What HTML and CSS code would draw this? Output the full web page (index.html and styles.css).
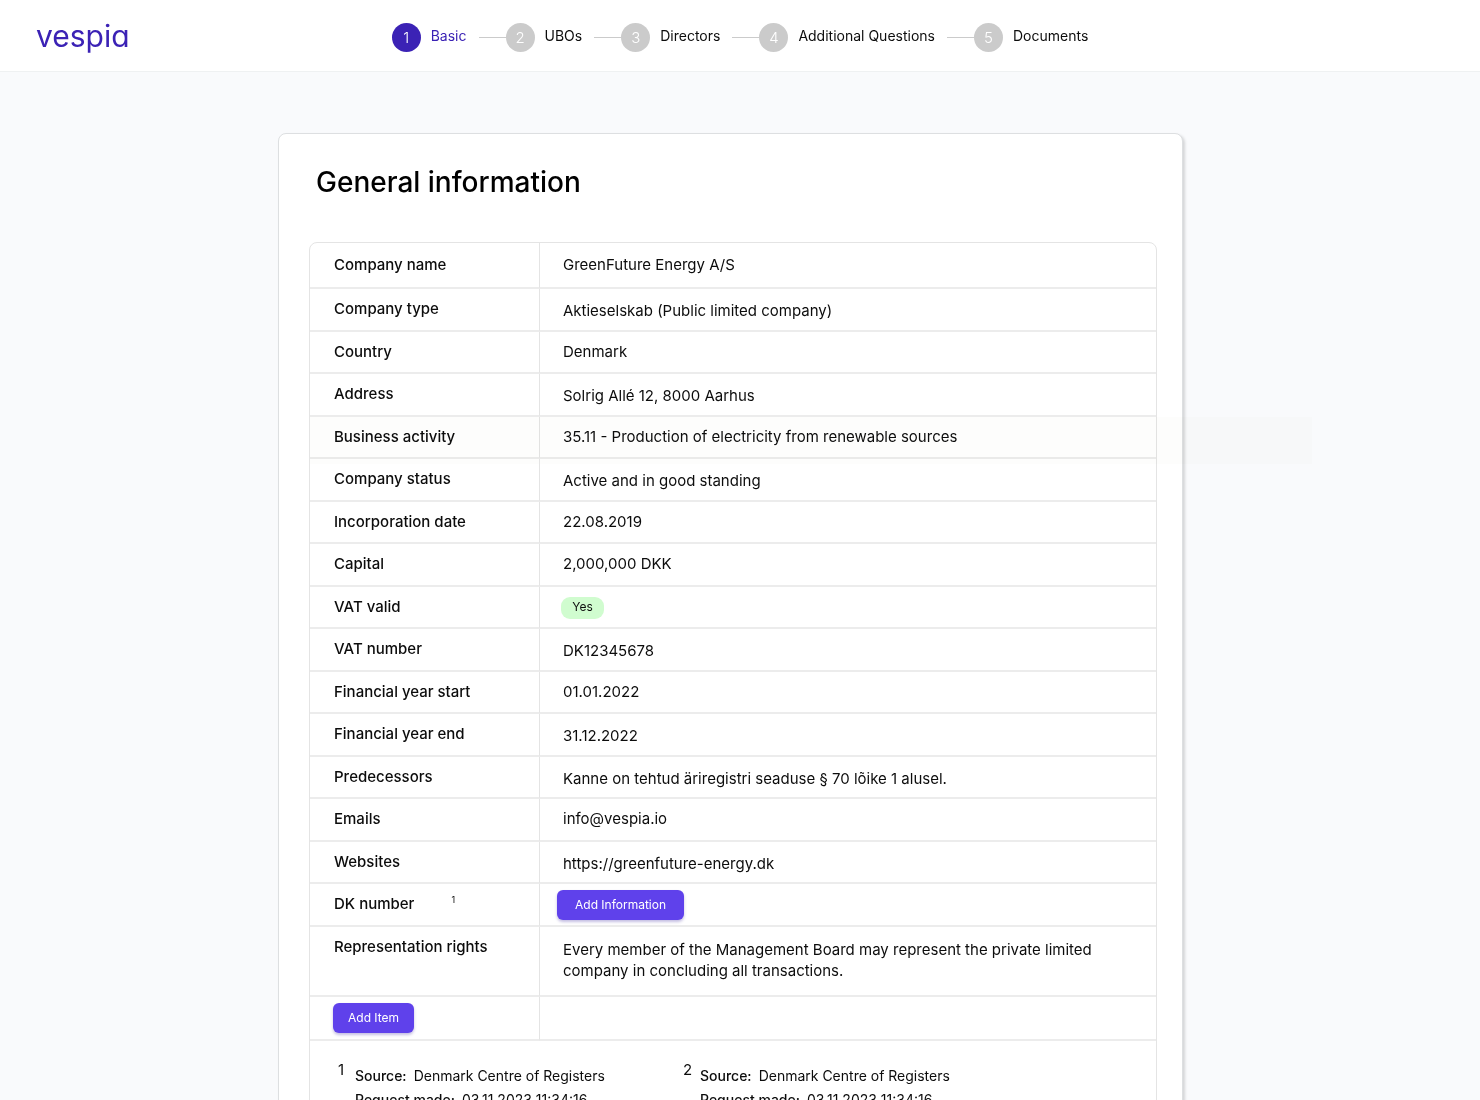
FILE: index.html
```html
<!DOCTYPE html>
<html lang="en">
<head>
  <meta charset="UTF-8">
  <meta name="viewport" content="width=device-width, initial-scale=1.0">
  <title>Vespia - General information</title>
  <link rel="stylesheet" href="styles.css">
</head>
<body>
  <header class="topbar">
    <a class="logo" href="#">vespia</a>
    <ol class="steps">
      <li class="step active" aria-current="step"><span class="step-number">1</span><span class="step-label">Basic</span></li>
      <li class="step"><span class="step-number">2</span><span class="step-label">UBOs</span></li>
      <li class="step"><span class="step-number">3</span><span class="step-label">Directors</span></li>
      <li class="step"><span class="step-number">4</span><span class="step-label">Additional Questions</span></li>
      <li class="step"><span class="step-number">5</span><span class="step-label">Documents</span></li>
    </ol>
  </header>

  <main>
    <section class="card" aria-labelledby="general-heading">
      <h1 id="general-heading">General information</h1>

      <div class="info">
        <table class="info-table">
          <tbody>
            <tr><th scope="row">Company name</th><td>GreenFuture Energy A/S</td></tr>
            <tr class="low"><th scope="row">Company type</th><td>Aktieselskab (Public limited company)</td></tr>
            <tr><th scope="row">Country</th><td>Denmark</td></tr>
            <tr class="low"><th scope="row">Address</th><td>Solrig Allé 12, 8000 Aarhus</td></tr>
            <tr class="highlight"><th scope="row">Business activity</th><td>35.11 - Production of electricity from renewable sources</td></tr>
            <tr class="low"><th scope="row">Company status</th><td>Active and in good standing</td></tr>
            <tr><th scope="row">Incorporation date</th><td>22.08.2019</td></tr>
            <tr><th scope="row">Capital</th><td>2,000,000 DKK</td></tr>
            <tr class="low"><th scope="row">VAT valid</th><td><span class="badge">Yes</span></td></tr>
            <tr class="low"><th scope="row">VAT number</th><td>DK12345678</td></tr>
            <tr><th scope="row">Financial year start</th><td>01.01.2022</td></tr>
            <tr class="low"><th scope="row">Financial year end</th><td>31.12.2022</td></tr>
            <tr class="low"><th scope="row">Predecessors</th><td>Kanne on tehtud äriregistri seaduse § 70 lõike 1 alusel.</td></tr>
            <tr><th scope="row">Emails</th><td>info@vespia.io</td></tr>
            <tr class="low"><th scope="row">Websites</th><td>https://greenfuture-energy.dk</td></tr>
            <tr><th scope="row">DK number <sup class="note-ref">1</sup></th><td><button type="button" class="btn btn-info">Add Information</button></td></tr>
            <tr class="tall"><th scope="row">Representation rights</th><td>Every member of the Management Board may represent the private limited company in concluding all transactions.</td></tr>
            <tr class="actions"><th><button type="button" class="btn">Add Item</button></th><td></td></tr>
          </tbody>
        </table>

        <div class="sources">
          <div class="source">
            <span class="source-number">1</span>
            <dl>
              <div><dt>Source:</dt><dd>Denmark Centre of Registers</dd></div>
              <div><dt>Request made:</dt><dd>03.11.2023 11:34:16</dd></div>
            </dl>
          </div>
          <div class="source">
            <span class="source-number">2</span>
            <dl>
              <div><dt>Source:</dt><dd>Denmark Centre of Registers</dd></div>
              <div><dt>Request made:</dt><dd>03.11.2023 11:34:16</dd></div>
            </dl>
          </div>
        </div>
      </div>
    </section>
  </main>
</body>
</html>
```
FILE: styles.css
```css
:root {
  --brand: #3b22b5;
  --button: #5f41eb;
  --line: #ececec;
  --muted: #cbcbcb;
  --page-bg: #f9fafc;
}

* {
  box-sizing: border-box;
}

body {
  margin: 0;
  font-family: Inter, "Liberation Sans", sans-serif;
  font-size: 15px;
  line-height: 21px;
  color: #0c0c0c;
  background: var(--page-bg);
}

/* Top bar */
.topbar {
  display: grid;
  grid-template-columns: 1fr auto 1fr;
  align-items: center;
  height: 72px;
  padding: 4px 36px 0;
  background: #fff;
  border-bottom: 1px solid #eff1f2;
}

.logo {
  padding-bottom: 4px;
  color: var(--brand);
  font-size: 30px;
  font-weight: 400;
  line-height: 36px;
  font-feature-settings: "cv11";
  text-decoration: none;
}

.steps {
  display: flex;
  gap: 12px;
  margin: 0;
  padding: 0;
  list-style: none;
}

.step {
  display: flex;
  align-items: center;
  font-size: 14px;
}

.step + .step::before {
  content: "";
  width: 27px;
  height: 1px;
  background: var(--muted);
}

.step-number {
  width: 29px;
  height: 29px;
  margin-right: 10px;
  border-radius: 50%;
  background: var(--muted);
  color: #fff;
  font-size: 15px;
  font-weight: 300;
  line-height: 29px;
  text-align: center;
}

.step-label {
  padding-bottom: 4px;
}

.active {
  color: var(--brand);
}

.active .step-number {
  background: var(--brand);
}

/* Card */
main {
  padding: 61px 19px 60px 0;
}

.card {
  max-width: 905px;
  margin: 0 auto;
  padding: 30px 25px 40px 30px;
  background: #fff;
  border: 1px solid #dddfe1;
  border-radius: 8px;
  box-shadow: 2px 2px 3px rgba(0, 0, 0, 0.15);
}

h1 {
  margin: 0 0 42px 7px;
  font-size: 28px;
  font-weight: 500;
  line-height: 36px;
  color: #000;
}

.info {
  border: 1px solid #e4e4e4;
  border-radius: 8px;
}

/* Company table */
.info-table {
  width: 100%;
  border-collapse: separate;
  border-spacing: 0;
  table-layout: fixed;
}

tr {
  position: relative;
  height: 42px;
}

tr:nth-child(even) {
  height: 43px;
}

tr:first-child {
  height: 46px;
}

th,
td {
  padding: 0 24px 2px;
  border-bottom: 2px solid var(--line);
  text-align: left;
  vertical-align: middle;
}

th {
  width: 230px;
  padding-right: 0;
  border-right: 1px solid #e4e4e4;
  font-weight: 500;
}

td {
  padding-left: 23px;
}

.low td {
  padding-top: 4px;
}

/* Tint runs past the card edge */
.highlight th::after {
  content: "";
  position: absolute;
  top: 0;
  left: 0;
  width: 1002px;
  height: 47px;
  background: #fdfdfc;
  mix-blend-mode: multiply;
  pointer-events: none;
}

tr.tall {
  height: 70px;
}

.tall th {
  padding-top: 9px;
  vertical-align: top;
}

tr.actions {
  height: 44px;
}

.badge {
  display: block;
  width: 43px;
  height: 22px;
  margin-left: -2px;
  border-radius: 9px;
  background: #d0fccf;
  font-size: 12px;
  line-height: 20px;
  text-align: center;
}

.note-ref {
  margin-left: 33px;
  font-size: 9px;
  font-weight: 400;
  line-height: 1;
}

.btn {
  display: block;
  height: 30px;
  margin: 2px 0 0 -1px;
  padding: 0 15px;
  border: 0;
  border-radius: 6px;
  background: var(--button);
  box-shadow: 0 2px 3px rgba(60, 40, 160, 0.3);
  color: #fff;
  font: 400 12px/30px Inter, sans-serif;
}

.btn-info {
  margin-left: -6px;
  padding: 0 18px;
}

/* Sources under the table */
.sources {
  display: grid;
  grid-template-columns: 345px 1fr;
  padding: 18px 28px 32px;
}

.source {
  display: flex;
}

.source-number {
  width: 17px;
}

dl {
  margin: 5px 0 0;
  font-size: 14px;
  line-height: 24px;
}

dl div {
  display: flex;
  gap: 7px;
}

dt {
  font-weight: 500;
}

dd {
  margin: 0;
}
```
